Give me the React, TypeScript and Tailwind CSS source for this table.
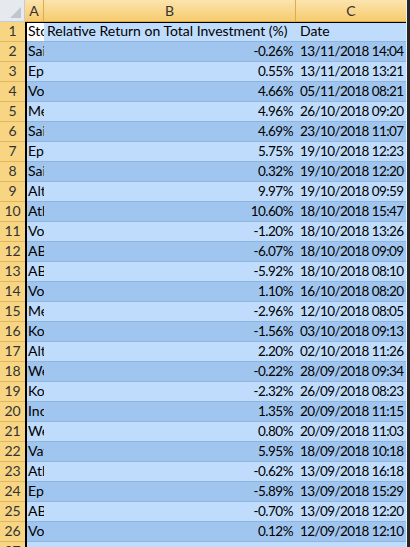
import React from "react";

const rows: [string, string, string][] = [
  ["Sainsbury", "-0.26%", "13/11/2018 14:04"],
  ["Epwin", "0.55%", "13/11/2018 13:21"],
  ["Vodafone", "4.66%", "05/11/2018 08:21"],
  ["Meggitt", "4.96%", "26/10/2018 09:20"],
  ["Sainsbury", "4.69%", "23/10/2018 11:07"],
  ["Epwin", "5.75%", "19/10/2018 12:23"],
  ["Sainsbury", "0.32%", "19/10/2018 12:20"],
  ["Altitude", "9.97%", "19/10/2018 09:59"],
  ["Atlantis", "10.60%", "18/10/2018 15:47"],
  ["Vodafone", "-1.20%", "18/10/2018 13:26"],
  ["AB Foods", "-6.07%", "18/10/2018 09:09"],
  ["AB Foods", "-5.92%", "18/10/2018 08:10"],
  ["Vodafone", "1.10%", "16/10/2018 08:20"],
  ["Meggitt", "-2.96%", "12/10/2018 08:05"],
  ["Kore", "-1.56%", "03/10/2018 09:13"],
  ["Altitude", "2.20%", "02/10/2018 11:26"],
  ["Wessex", "-0.22%", "28/09/2018 09:34"],
  ["Kore", "-2.32%", "26/09/2018 08:23"],
  ["Inchcape", "1.35%", "20/09/2018 11:15"],
  ["Wessex", "0.80%", "20/09/2018 11:03"],
  ["Vatic", "5.95%", "18/09/2018 10:18"],
  ["Atlantis", "-0.62%", "13/09/2018 16:18"],
  ["Epwin", "-5.89%", "13/09/2018 15:29"],
  ["AB Foods", "-0.70%", "13/09/2018 12:20"],
  ["Vodafone", "0.12%", "12/09/2018 12:10"],
  ["", "", ""],
];

const font = { fontFamily: "Lato, 'Noto Sans', sans-serif" };

export default function App() {
  return (
    <div
      className="w-[410px] h-[547px] overflow-hidden flex bg-[#262626] text-[14px] text-black"
      style={font}
    >
      <div className="w-[406px] flex flex-col">
        {/* column headers */}
        <div className="flex h-[22px] shrink-0 text-[14px]">
          <div className="relative w-[25px] h-full bg-[#e6e9ee] border-r border-b border-[#c5cbd3]">
            <div className="absolute right-[3px] bottom-[3px] w-0 h-0 border-l-[11px] border-l-transparent border-b-[11px] border-b-[#bfc6cf]" />
          </div>
          <div className="w-[19px] h-full flex items-center justify-center bg-gradient-to-b from-[#fce4ad] to-[#f6cb6c] border-r border-b border-[#d9ad55] text-[#333]">
            A
          </div>
          <div className="w-[252px] h-full flex items-center justify-center bg-gradient-to-b from-[#fce4ad] to-[#f6cb6c] border-r border-b border-[#d9ad55] text-[#333]">
            B
          </div>
          <div className="flex-1 h-full flex items-center justify-center bg-gradient-to-b from-[#fce4ad] to-[#f6cb6c] border-b border-[#d9ad55] text-[#333]">
            C
          </div>
        </div>
        <div className="flex flex-1 min-h-0">
          {/* row headers */}
          <div className="w-[25px] flex flex-col shrink-0 text-[14px]">
            {[...rows.map((_, i) => i + 1), 27].map((n) => (
              <div
                key={n}
                className="h-[20px] shrink-0 flex items-end justify-center pb-[3px] bg-[#f8d583] border-b border-[#e2b65e] text-[#333] leading-none"
              >
                {n}
              </div>
            ))}
          </div>
          {/* data */}
          <div className="flex-1 flex flex-col border-l-2 border-t border-black">
            <div className="h-[19px] shrink-0 flex border-b border-[#8fb4de] bg-[#bfdcfc]">
              <div className="w-[17px] overflow-hidden whitespace-nowrap bg-white pl-[1px] flex items-end leading-none pb-[3px]">
                Stock
              </div>
              <div className="w-[252px] overflow-hidden whitespace-nowrap pl-[3px] flex items-end leading-none pb-[3px]">
                Relative Return on Total Investment (%)
              </div>
              <div className="flex-1 overflow-hidden whitespace-nowrap pl-[4px] flex items-end leading-none pb-[3px]">
                Date
              </div>
            </div>
            {rows.map((r, i) => {
              const dark = i % 2 === 0;
              return (
                <div
                  key={i}
                  className={
                    "h-[20px] shrink-0 flex border-b border-[#8fb4de] " +
                    (dark ? "bg-[#a0c6ef]" : "bg-[#bfdcfc]")
                  }
                >
                  <div className="w-[17px] overflow-hidden whitespace-nowrap pl-[1px] flex items-end leading-none pb-[3px]">
                    {r[0]}
                  </div>
                  <div className="w-[252px] overflow-hidden whitespace-nowrap pr-[3px] flex items-end justify-end leading-none pb-[3px] text-[13.5px] tracking-[-0.5px]">
                    {r[1]}
                  </div>
                  <div className="flex-1 overflow-hidden whitespace-nowrap pl-[4px] flex items-end leading-none pb-[3px] text-[13.5px] tracking-[-0.6px]">
                    {r[2]}
                  </div>
                </div>
              );
            })}
          </div>
        </div>
      </div>
      <div className="w-[1px] bg-[#e8f0fa]" />
    </div>
  );
}
